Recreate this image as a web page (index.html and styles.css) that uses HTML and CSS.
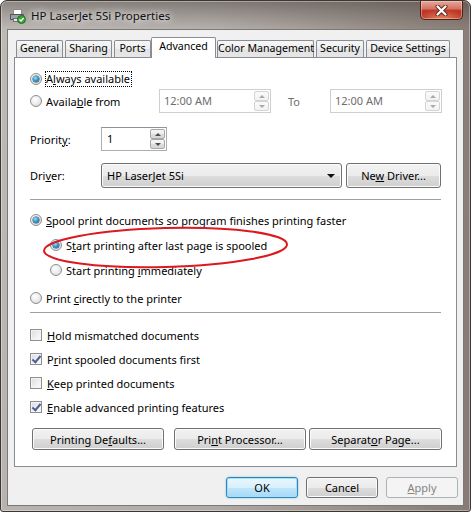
FILE: index.html
```html
<!DOCTYPE html>
<html>
<head>
<meta charset="utf-8">
<title>HP LaserJet 5Si Properties</title>
<link rel="stylesheet" href="styles.css">
</head>
<body>
<div class="window">
  <div class="titlebar">
    <svg class="app-icon" width="17" height="16" viewBox="0 0 17 16">
      <rect x="4.5" y="1.5" width="8" height="5" fill="#ffffff" stroke="#8a8a8a"/>
      <path d="M1.5 6.5h13v5h-13z" fill="#9ba1a7" stroke="#4d5257"/>
      <rect x="4.5" y="10.5" width="7" height="3" fill="#e8e8e8" stroke="#6d7277"/>
      <circle cx="12.5" cy="11.5" r="4" fill="#3aa53a" stroke="#1f6e1f"/>
      <path d="M10.5 11.5l1.5 1.5 2.6-3" stroke="#ffffff" stroke-width="1.4" fill="none"/>
    </svg>
    <span class="title">HP LaserJet 5Si Properties</span>
    <div class="close">
      <svg width="13" height="11" viewBox="0 0 13 11">
        <path d="M2.5 1.5l8 8M10.5 1.5l-8 8" stroke="#5a2b22" stroke-width="4" stroke-linecap="round"/>
        <path d="M2.5 1.5l8 8M10.5 1.5l-8 8" stroke="#ffffff" stroke-width="2.2" stroke-linecap="round"/>
      </svg>
    </div>
  </div>

  <div class="client">
    <div class="tabs">
      <div class="tab t-general">General</div>
      <div class="tab t-sharing">Sharing</div>
      <div class="tab t-ports">Ports</div>
      <div class="tab active t-advanced">Advanced</div>
      <div class="tab t-color">Color Management</div>
      <div class="tab t-security">Security</div>
      <div class="tab t-device">Device Settings</div>
    </div>

    <div class="panel">
      <div class="row r-always">
        <span class="radio checked"></span>
        <span class="focus">A<u>l</u>ways available</span>
      </div>

      <div class="row r-avail">
        <div class="avail-label">
          <span class="radio"></span>
          <span class="lbl">Availa<u>b</u>le from</span>
        </div>
        <div class="textbox disabled time">
          <span class="val">12:00 AM</span>
          <div class="spin"><span class="sb"><i class="up"></i></span><span class="sb"><i class="down"></i></span></div>
        </div>
        <span class="to">To</span>
        <div class="textbox disabled time time2">
          <span class="val">12:00 AM</span>
          <div class="spin"><span class="sb"><i class="up"></i></span><span class="sb"><i class="down"></i></span></div>
        </div>
      </div>

      <div class="row r-priority">
        <span class="field-label">Priorit<u>y</u>:</span>
        <div class="textbox prio">
          <span class="val">1</span>
          <div class="spin"><span class="sb"><i class="up"></i></span><span class="sb"><i class="down"></i></span></div>
        </div>
      </div>

      <div class="row r-driver">
        <span class="field-label">Dri<u>v</u>er:</span>
        <div class="combo">
          <span>HP LaserJet 5Si</span>
          <i class="arrow"></i>
        </div>
        <div class="btn new-driver"><span>Ne<u>w</u> Driver...</span></div>
      </div>

      <div class="sep sep1"></div>

      <div class="row r-spool">
        <span class="radio checked"></span>
        <span class="lbl"><u>S</u>pool print documents so program finishes printing faster</span>
      </div>
      <div class="row r-after sub">
        <span class="radio checked"></span>
        <span class="lbl">S<u>t</u>art printing after last page is spooled</span>
      </div>
      <div class="row r-immed sub">
        <span class="radio"></span>
        <span class="lbl">Start printing <u>i</u>mmediately</span>
      </div>
      <div class="row r-direct">
        <span class="radio"></span>
        <span class="lbl">Print <u>c</u>irectly to the printer</span>
      </div>

      <div class="sep sep2"></div>

      <div class="row r-check first">
        <span class="check"></span>
        <span class="lbl"><u>H</u>old mismatched documents</span>
      </div>
      <div class="row r-check">
        <span class="check checked"></span>
        <span class="lbl">P<u>r</u>int spooled documents first</span>
      </div>
      <div class="row r-check">
        <span class="check"></span>
        <span class="lbl"><u>K</u>eep printed documents</span>
      </div>
      <div class="row r-check">
        <span class="check checked"></span>
        <span class="lbl"><u>E</u>nable advanced printing features</span>
      </div>

      <div class="row r-buttons">
        <div class="btn wide"><span>Printing De<u>f</u>aults...</span></div>
        <div class="btn wide"><span>Pri<u>n</u>t Processor...</span></div>
        <div class="btn wide sep-page"><span>Separat<u>o</u>r Page...</span></div>
      </div>

      <svg class="annotation" width="300" height="230" viewBox="0 0 300 230">
        <ellipse cx="150.5" cy="189.5" rx="121.5" ry="19.5" fill="none" stroke="#dc1820" stroke-width="2" transform="rotate(-1.5 150.5 189.5)"/>
      </svg>
    </div>

    <div class="dlg-buttons">
      <div class="btn default"><span>OK</span></div>
      <div class="btn"><span>Cancel</span></div>
      <div class="btn disabled"><span><u>A</u>pply</span></div>
    </div>
  </div>
</div>
</body>
</html>
```

FILE: styles.css
```css
html, body {
  margin: 0;
  padding: 0;
  background: #ffffff;
}

body {
  font-family: "Noto Sans", "Open Sans", "DejaVu Sans", sans-serif;
  font-size: 11px;
  color: #000000;
}

u {
  text-decoration: underline;
  text-underline-offset: 1px;
}

/* ---------- window frame ---------- */
.window {
  width: 471px;
  height: 512px;
  box-sizing: border-box;
  border: 1px solid #3d3733;
  border-radius: 7px 7px 3px 3px;
  padding: 0 6px 5px 6px;
  display: flex;
  flex-direction: column;
  background:
    linear-gradient(90deg, rgba(255,255,255,0.10) 0%, rgba(255,255,255,0) 45%, rgba(70,50,40,0.40) 100%),
    linear-gradient(180deg, #7f7974 0px, #9c9692 14px, #b6b1ad 28px, #b0aba7 100%);
  box-shadow: inset 0 0 0 1px rgba(255,255,255,0.35);
}

.titlebar {
  height: 28px;
  flex: none;
  display: flex;
  align-items: flex-start;
}

.app-icon {
  margin-top: 7px;
  margin-left: 2px;
  flex: none;
}

.title {
  margin-left: 5px;
  margin-top: 7px;
  font-size: 11.5px;
  line-height: 16px;
  color: #111111;
  text-shadow: 0 0 6px #ffffff, 0 0 10px rgba(255,255,255,0.8);
}

.close {
  margin-left: auto;
  margin-right: 1px;
  width: 43px;
  height: 19px;
  box-sizing: border-box;
  border: 1px solid #4f2219;
  border-top: none;
  border-radius: 0 0 5px 5px;
  background:
    radial-gradient(ellipse 60% 50% at 50% 100%, rgba(255,170,120,0.7), rgba(255,170,120,0) 100%),
    linear-gradient(180deg, #e6a898 0%, #d27062 45%, #c0392a 50%, #b3301f 100%);
  box-shadow: inset 0 0 0 1px rgba(255,220,210,0.45);
  display: flex;
  align-items: center;
  justify-content: center;
}

/* ---------- client area ---------- */
.client {
  flex: 1;
  background: #f0f0f0;
  border: 1px solid #7d7874;
  padding: 7px 6px 0 6px;
  display: flex;
  flex-direction: column;
}

.tabs {
  display: flex;
  align-items: flex-end;
  height: 20px;
  margin-left: 2px;
  position: relative;
  z-index: 2;
}

.tab {
  box-sizing: border-box;
  height: 17px;
  border: 1px solid #898c95;
  border-bottom: none;
  border-radius: 2px 2px 0 0;
  background: linear-gradient(180deg, #f6f6f6 0%, #eeeeee 50%, #e3e3e3 51%, #e6e6e6 100%);
  text-align: center;
  font-size: 10.6px;
  line-height: 15px;
  margin-right: 2px;
  white-space: nowrap;
}

.tab.active {
  height: 21px;
  margin-bottom: -1px;
  background: #ffffff;
  line-height: 17px;
  margin-right: 1px;
}

.t-general { width: 47px; }
.t-sharing { width: 47px; }
.t-ports { width: 37px; margin-right: 0; }
.t-advanced { width: 65px; }
.t-color { width: 97px; }
.t-security { width: 48px; }
.t-device { width: 84px; margin-right: 0; }

.panel {
  position: relative;
  z-index: 1;
  width: 443px;
  height: 410px;
  box-sizing: border-box;
  border: 1px solid #898c95;
  background: #ffffff;
  padding: 0 15px 0 15px;
}

.row {
  display: flex;
  align-items: center;
}

.lbl {
  margin-left: 4px;
  white-space: nowrap;
}

/* radio buttons */
.radio {
  flex: none;
  width: 12px;
  height: 12px;
  box-sizing: border-box;
  border-radius: 50%;
  border: 1px solid #8b8d8f;
  background: radial-gradient(circle at 40% 35%, #ffffff 0%, #eeeeee 45%, #d2d2d2 100%);
  position: relative;
}

.radio.checked::after {
  content: "";
  position: absolute;
  left: 2px;
  top: 2px;
  width: 6px;
  height: 6px;
  border-radius: 50%;
  background: radial-gradient(circle at 40% 35%, #a6e6ff 0%, #3b9fd6 40%, #14507f 100%);
  box-shadow: 0 0 0 0.5px #1b3f5e;
}

/* checkboxes */
.check {
  flex: none;
  width: 12px;
  height: 12px;
  box-sizing: border-box;
  border: 1px solid #8e8f8f;
  background: linear-gradient(135deg, #dcdcdc 0%, #f0f0f0 60%, #fbfbfb 100%);
  box-shadow: inset 0 0 0 1px #f4f4f4;
  position: relative;
}

.check.checked::after {
  content: "";
  position: absolute;
  left: 3px;
  top: 0px;
  width: 3px;
  height: 7px;
  border-right: 2px solid #4a5f97;
  border-bottom: 2px solid #4a5f97;
  transform: rotate(40deg);
}

.r-check .lbl {
  margin-left: 5px;
}

/* focus rectangle */
.focus {
  margin-left: 3px;
  border: 1px dotted #000000;
  padding: 0 1px 0 0;
  line-height: 14px;
}

/* row geometry */
.r-always { margin-top: 13px; height: 16px; }

.r-avail { margin-top: 2px; height: 24px; }
.avail-label { display: flex; align-items: center; width: 129px; flex: none; }

.to {
  width: 42px;
  margin-left: 17px;
  color: #6d6d6d;
  flex: none;
}

.r-priority { margin-top: 14px; height: 24px; }
.field-label { width: 71px; flex: none; }

.r-driver { margin-top: 12px; height: 25px; }

.sep {
  height: 1px;
  background: #a0a0a0;
  width: 411px;
}

.sep1 { margin-top: 11px; }

.r-spool { margin-top: 12px; height: 16px; }
.r-after { margin-top: 9px; height: 16px; }
.r-immed { margin-top: 9px; height: 16px; }
.sub { padding-left: 20px; }
.r-direct { margin-top: 12px; height: 16px; }

.sep2 { margin-top: 6px; }

.r-check { margin-top: 8px; height: 16px; }
.r-check.first { margin-top: 14px; }

.r-buttons {
  margin-top: 13px;
  height: 22px;
  padding-left: 2px;
  gap: 10px;
}

.r-buttons .sep-page {
  margin-left: -7px;
  width: 133px;
}

/* text boxes with spinners */
.textbox {
  box-sizing: border-box;
  display: flex;
  align-items: center;
  height: 24px;
  border: 1px solid #abadb3;
  border-top-color: #8e929b;
  background: #ffffff;
  padding-left: 4px;
  flex: none;
}

.textbox .val {
  line-height: 16px;
}

.textbox.disabled {
  border-color: #cfcfcf;
  color: #6d6d6d;
}

.time { width: 112px; }
.time2 { width: 112px; }
.prio { width: 66px; padding-left: 5px; }

.spin {
  margin-left: auto;
  align-self: stretch;
  width: 16px;
  box-sizing: border-box;
  padding: 1px 1px 1px 0;
  display: flex;
  flex-direction: column;
}

.sb {
  flex: 1;
  box-sizing: border-box;
  border: 1px solid #a7a7a7;
  border-radius: 2px;
  background: linear-gradient(180deg, #f7f7f7 0%, #ececec 50%, #dedede 51%, #d6d6d6 100%);
  display: flex;
  align-items: center;
  justify-content: center;
}

.disabled .sb {
  border-color: #d4d4d4;
  background: linear-gradient(180deg, #fafafa 0%, #f2f2f2 100%);
}

.sb i {
  width: 0;
  height: 0;
  border-left: 3px solid transparent;
  border-right: 3px solid transparent;
}

.sb i.up { border-bottom: 3px solid #4d4d4d; }
.sb i.down { border-top: 3px solid #4d4d4d; }
.disabled .sb i.up { border-bottom-color: #a9a9a9; }
.disabled .sb i.down { border-top-color: #a9a9a9; }

/* combo */
.combo {
  box-sizing: border-box;
  width: 241px;
  height: 25px;
  border: 1px solid #707070;
  border-radius: 3px;
  background: linear-gradient(180deg, #f2f2f2 0%, #ebebeb 50%, #dddddd 51%, #cfcfcf 100%);
  box-shadow: inset 0 0 0 1px #fbfbfb;
  display: flex;
  align-items: center;
  padding: 0 6px 0 5px;
  flex: none;
}

.combo .arrow {
  margin-left: auto;
  width: 0;
  height: 0;
  border-left: 4px solid transparent;
  border-right: 4px solid transparent;
  border-top: 4px solid #111111;
}

/* buttons */
.btn {
  box-sizing: border-box;
  border: 1px solid #707070;
  border-radius: 3px;
  background: linear-gradient(180deg, #f2f2f2 0%, #ebebeb 50%, #dddddd 51%, #cfcfcf 100%);
  box-shadow: inset 0 0 0 1px #fbfbfb;
  display: flex;
  align-items: center;
  justify-content: center;
  white-space: nowrap;
  flex: none;
}

.new-driver {
  width: 95px;
  height: 25px;
  margin-left: 4px;
}

.wide {
  width: 132px;
  height: 22px;
}

.dlg-buttons {
  display: flex;
  justify-content: flex-end;
  gap: 8px;
  margin-top: 10px;
  margin-right: -1px;
}

.dlg-buttons .btn {
  width: 72px;
  height: 21px;
}

.btn.default {
  border-color: #3c7fb1;
  background: linear-gradient(180deg, #eaf6fd 0%, #d9f0fc 50%, #bee6fd 51%, #a7d9f5 100%);
  box-shadow: inset 0 0 0 1px #9fe3fb, 0 0 2px #6cc4f0;
}

.btn.disabled {
  border-color: #adb2b5;
  background: #f4f4f4;
  box-shadow: none;
  color: #838383;
}

/* annotation overlay */
.annotation {
  position: absolute;
  left: 0;
  top: 0;
  pointer-events: none;
  overflow: visible;
}
```
